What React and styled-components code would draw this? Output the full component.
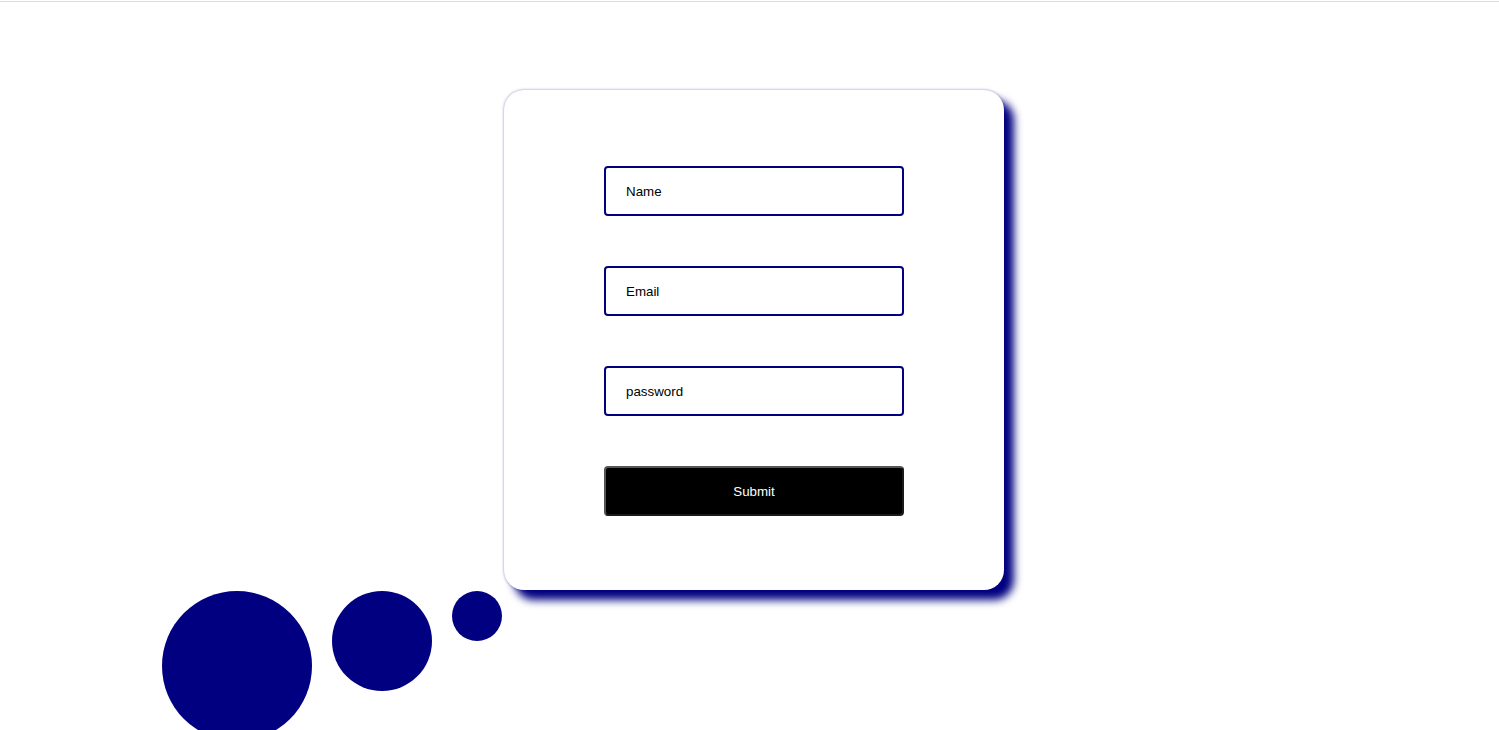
import styled, { createGlobalStyle } from "styled-components";

const GlobalStyle = createGlobalStyle`
  * {
    box-sizing: border-box;
  }
  body {
    margin: 0;
    background: #ffffff;
    font-family: "Liberation Sans", Arial, sans-serif;
  }
`;

const TopRule = styled.div`
  height: 1px;
  margin-top: 1px;
  background: #dcdcdc;
`;

const Scene = styled.main`
  display: flex;
  flex-direction: column;
  padding-top: 88px;
  height: 728px;
  overflow: hidden;
`;

const Card = styled.form`
  flex: none;
  width: 500px;
  height: 500px;
  margin-left: 504px;
  padding-top: 76px;
  display: flex;
  flex-direction: column;
  align-items: center;
  gap: 50px;
  background: #ffffff;
  border-radius: 20px;
  box-shadow: 10px 10px 8px #000080, 0 0 3px rgba(0, 0, 128, 0.45);
`;

const Field = styled.input`
  width: 300px;
  height: 50px;
  padding: 0 20px;
  border: 2px solid #000080;
  border-radius: 4px;
  font-family: "Liberation Sans", Arial, sans-serif;
  font-size: 13.33px;
  color: #000;
  outline: none;

  &::placeholder {
    color: #000;
  }
`;

const SubmitButton = styled.button`
  width: 300px;
  height: 50px;
  background: #000;
  color: #fff;
  border: 2px solid;
  border-color: #555 #1a1a1a #1a1a1a #555;
  border-radius: 4px;
  font-family: "Liberation Sans", Arial, sans-serif;
  font-size: 13.33px;
  cursor: pointer;
`;

const Bubbles = styled.div`
  flex: none;
  display: flex;
  align-items: flex-start;
  gap: 20px;
  margin-top: 1px;
  margin-left: 162px;
`;

const Bubble = styled.span`
  display: block;
  flex: none;
  width: ${(p) => p.size}px;
  height: ${(p) => p.size}px;
  border-radius: 50%;
  background: #000080;
`;

export default function App() {
  return (
    <>
      <GlobalStyle />
      <TopRule />
      <Scene>
        <Card onSubmit={(e) => e.preventDefault()}>
          <Field type="text" placeholder="Name" />
          <Field type="email" placeholder="Email" />
          <Field type="password" placeholder="password" />
          <SubmitButton type="submit">Submit</SubmitButton>
        </Card>
        <Bubbles>
          <Bubble size={150} />
          <Bubble size={100} />
          <Bubble size={50} />
        </Bubbles>
      </Scene>
    </>
  );
}
